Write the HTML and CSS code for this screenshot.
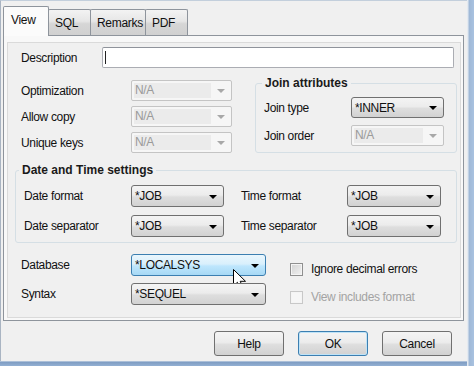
FILE: index.html
```html
<!DOCTYPE html>
<html lang="en">
<head>
    <meta charset="UTF-8">
    <title>View properties</title>
    <link rel="stylesheet" href="styles.css">
</head>
<body>

    <div class="screen">
        <div class="dialog">
            <div class="tabs">
                <div class="tab active tab-view">View</div>
                <div class="tab tab-sql">SQL</div>
                <div class="tab tab-remarks">Remarks</div>
                <div class="tab tab-pdf">PDF</div>
            </div>

            <div class="panel">
                <div class="page">
                    <div class="desc-row">
                        <label class="lbl desc-lbl">Description</label>
                        <div class="text-input"><span class="caret"></span></div>
                    </div>

                    <div class="top-section">
                        <div class="left-col">
                            <div class="field">
                                <label class="lbl w110">Optimization</label>
                                <div class="combo disabled w101"><span class="value">N/A</span><span class="btn"><span class="arrow"></span></span></div>
                            </div>
                            <div class="field">
                                <label class="lbl w110">Allow copy</label>
                                <div class="combo disabled w101"><span class="value">N/A</span><span class="btn"><span class="arrow"></span></span></div>
                            </div>
                            <div class="field">
                                <label class="lbl w110">Unique keys</label>
                                <div class="combo disabled w101"><span class="value">N/A</span><span class="btn"><span class="arrow"></span></span></div>
                            </div>
                        </div>

                        <fieldset class="group join-group">
                            <legend>Join attributes</legend>
                            <div class="join-rows">
                                <div class="field">
                                    <label class="lbl w87">Join type</label>
                                    <div class="combo w93"><span class="value">*INNER</span><span class="btn"><span class="arrow"></span></span></div>
                                </div>
                                <div class="field">
                                    <label class="lbl w87">Join order</label>
                                    <div class="combo disabled w93"><span class="value">N/A</span><span class="btn"><span class="arrow"></span></span></div>
                                </div>
                            </div>
                        </fieldset>
                    </div>

                    <fieldset class="group date-group">
                        <legend>Date and Time settings</legend>
                        <div class="date-grid">
                            <label class="lbl">Date format</label>
                            <div class="combo tall"><span class="value">*JOB</span><span class="btn"><span class="arrow"></span></span></div>
                            <label class="lbl right-lbl">Time format</label>
                            <div class="combo tall"><span class="value">*JOB</span><span class="btn"><span class="arrow"></span></span></div>
                            <label class="lbl">Date separator</label>
                            <div class="combo tall"><span class="value">*JOB</span><span class="btn"><span class="arrow"></span></span></div>
                            <label class="lbl right-lbl">Time separator</label>
                            <div class="combo tall"><span class="value">*JOB</span><span class="btn"><span class="arrow"></span></span></div>
                        </div>
                    </fieldset>

                    <div class="bottom-section">
                        <div class="db-col">
                            <div class="field">
                                <label class="lbl w110">Database</label>
                                <div class="combo tall hover w135"><span class="value">*LOCALSYS</span><span class="btn"><span class="arrow"></span></span>
                                    <svg class="cursor" width="15" height="22" viewBox="0 0 15 22">
                                        <path d="M1.5 1.5 L1.5 18 L5.4 14.3 L8.2 20.5 L10.9 19.3 L8.2 13.3 L13.5 13.3 Z" fill="#fff" stroke="#000" stroke-width="1" stroke-linejoin="round"/>
                                    </svg>
                                </div>
                            </div>
                            <div class="field">
                                <label class="lbl w110">Syntax</label>
                                <div class="combo tall w135"><span class="value">*SEQUEL</span><span class="btn"><span class="arrow"></span></span></div>
                            </div>
                        </div>
                        <div class="check-col">
                            <div class="check-row">
                                <span class="checkbox"></span>
                                <span class="lbl">Ignore decimal errors</span>
                            </div>
                            <div class="check-row disabled">
                                <span class="checkbox"></span>
                                <span class="lbl">View includes format</span>
                            </div>
                        </div>
                    </div>
                </div>
            </div>

            <div class="buttons">
                <button class="push">Help</button>
                <button class="push default">OK</button>
                <button class="push">Cancel</button>
            </div>
        </div>
        <div class="frame-right"></div>
        <div class="frame-bottom"></div>
    </div>

</body>
</html>
```

FILE: styles.css
```css
* {
    box-sizing: border-box;
}
body {
    margin: 0;
    font-family: "Liberation Sans", Arial, sans-serif;
    font-size: 12px;
    line-height: 14px;
    color: #111;
    overflow: hidden;
}
.screen {
    width: 474px;
    height: 366px;
    display: grid;
    grid-template-columns: 467px 7px;
    grid-template-rows: 361px 5px;
    background: #f0f0f0;
}
.dialog {
    padding: 5px 3px 0 2px;
    background: #f0f0f0;
    border-top: 1px solid #c3cfdc;
    border-left: 1px solid #a9b4c2;
}
.frame-right {
    background: linear-gradient(90deg, #e4eaf1 0px, #e4eaf1 1px, #9fb8d6 2px, #a9c2e0 100%);
    grid-row: 1 / 3;
    grid-column: 2;
}
.frame-bottom {
    grid-column: 1;
    background: linear-gradient(#d9e3ee 0px, #7e9cc2 1px, #93b0d3 100%);
}

/* tabs */
.tabs {
    display: flex;
    align-items: flex-end;
    height: 29px;
}
.tab {
    height: 26px;
    padding: 6px 0 0 6px;
    border: 1px solid #8e949c;
    border-bottom: none;
    border-radius: 2px 2px 0 0;
    background: linear-gradient(#f3f3f3, #e6e6e6 45%, #d6d6d6 55%, #d0d0d0);
    margin-left: -1px;
    letter-spacing: -0.3px;
}
.tab.active {
    height: 30px;
    padding: 6px 0 0 7px;
    background: #fbfbfb;
    margin-bottom: -1px;
    margin-left: 0;
    position: relative;
    z-index: 1;
}
.tab-view { width: 46px; }
.tab-sql { width: 43px; }
.tab-remarks { width: 56px; }
.tab-pdf { width: 43px; }

.panel {
    height: 286px;
    border: 1px solid #8e949c;
    background: #f8f8f8;
    padding: 6px 2px 2px 3px;
    display: flex;
}
.page {
    flex: 1;
    border: 1px solid #dadada;
    background: #f0f0f0;
    padding: 4px 3px 0 13px;
}

.lbl {
    letter-spacing: -0.35px;
    white-space: nowrap;
}
.w110 { width: 110px; flex: none; }
.w87 { width: 87px; flex: none; }
.w101 { width: 101px; }
.w93 { width: 93px; }
.w135 { width: 135px; }

.desc-row {
    display: flex;
    align-items: center;
    height: 21px;
}
.desc-lbl {
    width: 81px;
}
.text-input {
    flex: 1;
    height: 21px;
    margin-right: 3px;
    background: #fff;
    border: 1px solid #abadb3;
    border-top-color: #8f939b;
    border-radius: 2px;
    padding: 3px 0 0 2px;
}
.caret {
    display: block;
    width: 1px;
    height: 13px;
    background: #222;
}

.field {
    display: flex;
    align-items: center;
}

/* combo boxes */
.combo {
    height: 21px;
    display: flex;
    align-items: center;
    border: 1px solid #707070;
    border-radius: 3px;
    background: linear-gradient(#f4f4f4, #ececec 45%, #dedede 55%, #d2d2d2);
    flex: none;
    position: relative;
}
.combo.tall {
    height: 22px;
}
.combo .value {
    flex: 1;
    padding-left: 3px;
    letter-spacing: -0.35px;
}
.combo .btn {
    width: 20px;
    align-self: stretch;
    display: flex;
    align-items: center;
    justify-content: center;
}
.arrow {
    width: 0;
    height: 0;
    border-left: 4px solid transparent;
    border-right: 4px solid transparent;
    border-top: 4px solid #000;
    margin-top: 1px;
}
.combo.disabled {
    background: #f6f6f6;
    border-color: #c4c4c4;
    border-radius: 2px;
    padding: 2px 0 2px 2px;
    color: #9a9a9a;
}
.combo.disabled .value {
    align-self: stretch;
    background: #ebebeb;
    padding-left: 1px;
    line-height: 15px;
}
.combo.disabled .arrow {
    border-top-color: #a8a8a8;
}
.combo.hover {
    border-color: #3c7fb1;
    background: linear-gradient(#eaf6fd, #d9f0fc 45%, #bee6fd 55%, #a7d9f5);
}
.cursor {
    position: absolute;
    left: 100px;
    top: 13px;
}

.top-section {
    display: flex;
    margin-top: 8px;
}
.left-col {
    padding-top: 4px;
    width: 211px;
    display: flex;
    flex-direction: column;
    gap: 5px;
}

/* group boxes */
.group {
    margin: 0;
    padding: 0 12px 6px 8px;
    border: 1px solid #d5dfe5;
    border-radius: 3px;
    min-width: 0;
}
.group legend {
    font-weight: bold;
    padding: 0 3px;
    color: #1a1a1a;
}
.join-group {
    margin-left: 23px;
    flex: 1;
}
.join-group legend {
    margin-left: -2px;
}
.join-rows {
    margin-top: 7px;
    display: flex;
    flex-direction: column;
    gap: 7px;
}

.date-group {
    margin: 10px 0 0 -6px;
    padding: 0 0 5px 8px;
}
.date-group legend {
    margin-left: -5px;
}
.date-grid {
    margin-top: 8px;
    display: grid;
    grid-template-columns: 107px 93px 123px 94px;
    row-gap: 8px;
    align-items: center;
}
.right-lbl {
    padding-left: 17px;
}

.bottom-section {
    display: flex;
    margin-top: 11px;
}
.db-col {
    display: flex;
    flex-direction: column;
    gap: 7px;
}
.check-col {
    margin-left: 24px;
    padding-top: 8px;
    display: flex;
    flex-direction: column;
    gap: 14px;
}
.check-row {
    display: flex;
    align-items: center;
    height: 14px;
}
.checkbox {
    width: 13px;
    height: 13px;
    border: 1px solid #8f8f8f;
    background: linear-gradient(135deg, #d2d2d2, #f2f2f2);
    box-shadow: inset 0 0 0 1px #f4f4f4;
    margin-right: 8px;
}
.check-row.disabled {
    color: #a3a3a3;
}
.check-row.disabled .checkbox {
    border-color: #c8c8c8;
    background: #f6f6f6;
}

/* dialog buttons */
.buttons {
    display: flex;
    justify-content: flex-end;
    gap: 14px;
    margin-top: 10px;
    padding-right: 12px;
}
.push {
    width: 70px;
    height: 25px;
    font-family: "Liberation Sans", Arial, sans-serif;
    font-size: 12px;
    letter-spacing: -0.3px;
    color: #111;
    border: 1px solid #707070;
    border-radius: 3px;
    background: linear-gradient(#f4f4f4, #ececec 45%, #dedede 55%, #d2d2d2);
    padding: 0;
}
.push.default {
    border-color: #3c7fb1;
    box-shadow: inset 0 0 0 1px #bfe3f7;
}
```
